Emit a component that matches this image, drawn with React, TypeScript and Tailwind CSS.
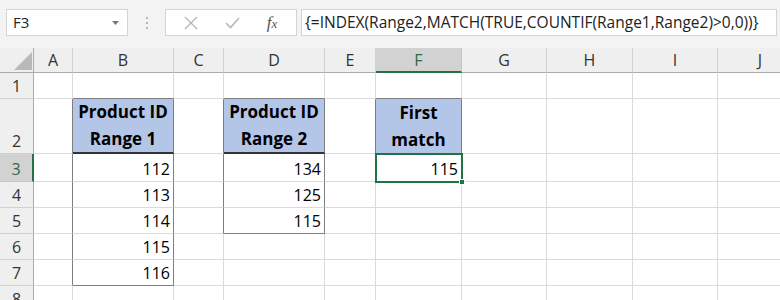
import React from "react";

const cols = ["A", "B", "C", "D", "E", "F", "G", "H", "I", "J"];
const rows = [1, 2, 3, 4, 5, 6, 7, 8];

const headers: Record<string, [string, string]> = {
  B: ["Product ID", "Range 1"],
  D: ["Product ID", "Range 2"],
  F: ["First", "match"],
};

const values: Record<string, string> = {
  B3: "112",
  B4: "113",
  B5: "114",
  B6: "115",
  B7: "116",
  D3: "134",
  D4: "125",
  D5: "115",
  F3: "115",
};

function rightDark(c: string, r: number) {
  if ((c === "A" || c === "B") && r >= 2 && r <= 7) return true;
  if ((c === "C" || c === "D") && r >= 2 && r <= 5) return true;
  if (c === "E" && r >= 2 && r <= 3) return true;
  if (c === "F" && r === 2) return true;
  return false;
}

function bottomClass(c: string, r: number) {
  if (r === 2 && (c === "B" || c === "D")) return "border-b-2 border-b-[#333333]";
  if (r === 1 && (c === "B" || c === "D" || c === "F")) return "border-b border-b-[#7f7f7f]";
  if (r === 2 && c === "F") return "border-b border-b-[#7f7f7f]";
  if (r === 7 && c === "B") return "border-b border-b-[#7f7f7f]";
  if (r === 5 && c === "D") return "border-b border-b-[#7f7f7f]";
  return "border-b border-b-[#dadada]";
}

function Cell({ c, r }: { c: string; r: number }) {
  const key = `${c}${r}`;
  const right = rightDark(c, r) ? "border-r border-r-[#7f7f7f]" : "border-r border-r-[#dadada]";
  const bottom = bottomClass(c, r);
  const isHeader = r === 2 && headers[c];
  const bg = isHeader ? "bg-[#b4c6e7]" : "bg-white";
  return (
    <div className={`${right} ${bottom} ${bg} flex flex-col justify-end overflow-hidden`}>
      {isHeader ? (
        <div className="flex flex-col items-center font-bold text-[17px] leading-[27px] text-black whitespace-nowrap">
          <span>{headers[c][0]}</span>
          <span>{headers[c][1]}</span>
        </div>
      ) : values[key] ? (
        <div className="text-right pr-[3px] text-[16px] leading-[24px] text-black">{values[key]}</div>
      ) : null}
    </div>
  );
}

export default function App() {
  return (
    <div
      className="w-[780px] h-[300px] overflow-hidden bg-[#f3f3f3] text-[#222]"
      style={{ fontFamily: '"Open Sans", "Noto Sans", Arial, sans-serif' }}
    >
      {/* Formula bar */}
      <div className="h-[48px] flex items-start pt-[9px] pl-[6px] gap-0">
        <div className="w-[122px] h-[27px] bg-white border border-[#d4d4d4] flex items-center justify-between pl-[6px] pr-[8px]">
          <span className="text-[15px] text-[#222]">F3</span>
          <svg width="7" height="4" viewBox="0 0 7 4">
            <path d="M0 0 L7 0 L3.5 4 Z" fill="#777" />
          </svg>
        </div>
        <div className="w-[37px] h-[27px] flex flex-col items-center justify-center gap-[3px]">
          <span className="w-[2px] h-[2px] bg-[#b5b5b5]" />
          <span className="w-[2px] h-[2px] bg-[#b5b5b5]" />
          <span className="w-[2px] h-[2px] bg-[#b5b5b5]" />
        </div>
        <div className="w-[132px] h-[27px] bg-white border border-[#d4d4d4] flex items-center">
          <div className="w-[46px] flex justify-center pl-[4px]">
            <svg width="14" height="14" viewBox="0 0 14 14">
              <path d="M1 1 L13 13 M13 1 L1 13" stroke="#b7b7b7" strokeWidth="1.4" />
            </svg>
          </div>
          <div className="w-[40px] flex justify-center">
            <svg width="15" height="12" viewBox="0 0 15 12">
              <path d="M1 6 L5.5 10.5 L14 1" stroke="#b7b7b7" strokeWidth="1.6" fill="none" />
            </svg>
          </div>
          <div
            className="w-[40px] flex justify-center text-[17px] italic text-[#555]"
            style={{ fontFamily: '"Liberation Serif", "DejaVu Serif", serif' }}
          >
            <span>
              f<span className="text-[13px]">x</span>
            </span>
          </div>
        </div>
        <div className="ml-[4px] w-[476px] h-[27px] bg-white border border-[#d4d4d4] flex items-center pl-[3px]">
          <span className="text-[15.5px] text-[#222] whitespace-nowrap">
            {"{=INDEX(Range2,MATCH(TRUE,COUNTIF(Range1,Range2)>0,0))}"}
          </span>
        </div>
      </div>

      {/* Grid */}
      <div className="relative">
        <div className="grid grid-cols-[34px_39px_101px_50px_101px_51px_86px_85px_86px_85px_85px] grid-rows-[25px_26px_55px_28px_26px_26px_26px_26px_26px]">
          {/* corner */}
          <div className="bg-[#efefef] border-r border-r-[#ababab] border-b border-b-[#ababab] relative">
            <svg className="absolute left-[14px] top-[4px]" width="18" height="18" viewBox="0 0 18 18">
              <path d="M18 0 L18 18 L0 18 Z" fill="#b9b9b9" />
            </svg>
          </div>
          {cols.map((c) =>
            c === "F" ? (
              <div
                key={c}
                className="bg-[#d2d2d2] border-r border-r-[#c6c6c6] border-b-2 border-b-[#217346] flex items-center justify-center text-[16px] text-[#2e6b45]"
              >
                {c}
              </div>
            ) : (
              <div
                key={c}
                className="bg-[#efefef] border-r border-r-[#d0d0d0] border-b border-b-[#ababab] flex items-center justify-center text-[16px] text-[#333]"
              >
                {c}
              </div>
            )
          )}
          {rows.map((r) => (
            <React.Fragment key={r}>
              {r === 3 ? (
                <div className="bg-[#d2d2d2] border-r-2 border-r-[#217346] border-b border-b-[#c6c6c6] flex items-end justify-center text-[16px] leading-[24px] text-[#2e6b45]">
                  {r}
                </div>
              ) : (
                <div className="bg-[#efefef] border-r border-r-[#ababab] border-b border-b-[#d0d0d0] flex items-end justify-center text-[16px] leading-[24px] text-[#333]">
                  {r}
                </div>
              )}
              {cols.map((c) => (
                <Cell key={c + r} c={c} r={r} />
              ))}
            </React.Fragment>
          ))}
        </div>
        {/* selection */}
        <div className="absolute left-[375px] top-[105px] w-[88px] h-[30px] border-2 border-[#217346] pointer-events-none" />
        <div className="absolute left-[459px] top-[131px] w-[6px] h-[6px] bg-[#217346] border border-white" />
      </div>
    </div>
  );
}
